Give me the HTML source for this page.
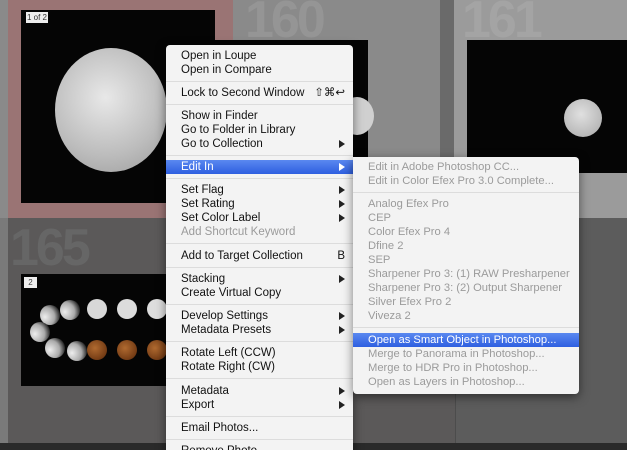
<!DOCTYPE html>
<html style="width:627px;height:450px;overflow:hidden"><head><meta charset="utf-8"><style>
*{margin:0;padding:0;box-sizing:border-box}
body{width:627px;height:450px;overflow:hidden;position:relative;background:#5a5858;font-family:"Liberation Sans",sans-serif}
.abs{position:absolute}
.num{position:absolute;font-weight:bold;font-size:52px;letter-spacing:-3px;line-height:1}
.menu{position:absolute;background:#f3f3f3;box-shadow:0 3px 10px rgba(0,0,0,.5);border-radius:4px;font-size:11.5px;color:#111;overflow:hidden}
.it{height:14px;line-height:14px;padding-left:15px;position:relative;white-space:nowrap}
.sep{height:9px;position:relative}
.sep:after{content:"";position:absolute;left:0;right:0;top:4px;height:1px;background:#dcdcdc}
.ar:after{content:"";position:absolute;right:8px;top:3px;border-left:6px solid #222;border-top:4px solid transparent;border-bottom:4px solid transparent}
.dis{color:#9b9b9b}
.hl{background:linear-gradient(#5a88f0,#2e5fe0);color:#fff}
.hl.ar:after{border-left-color:#fff}
.key{position:absolute;right:8px;top:0}
.sub{font-size:11.2px}
</style></head><body>
<div class="abs" style="left:0;top:0;width:8px;height:218px;background:#8a8a8a"></div>
<div class="abs" style="left:8px;top:0;width:225px;height:218px;background:#9a7474"></div>
<div class="abs" style="left:233px;top:0;width:207px;height:218px;background:#8a8a8a"></div>
<div class="abs" style="left:440px;top:0;width:14px;height:218px;background:#6a6a6a"></div>
<div class="abs" style="left:454px;top:0;width:173px;height:218px;background:#9b9b9b"></div>
<div class="num" style="left:245px;top:-6px;color:#959595">160</div>
<div class="num" style="left:462px;top:-6px;color:#a4a4a4">161</div>
<div class="abs" style="left:0;top:218px;width:8px;height:232px;background:#7a7a7a"></div>
<div class="abs" style="left:8px;top:218px;width:447px;height:225px;background:#5b5959"></div>
<div class="abs" style="left:455px;top:218px;width:172px;height:225px;background:#5c5c5c;border-left:1px solid #4c4c4c"></div>
<div class="abs" style="left:0;top:443px;width:627px;height:7px;background:#2a2a2a"></div>
<div class="num" style="left:10px;top:222px;color:#666">165</div>
<div class="abs" style="left:21px;top:10px;width:194px;height:193px;background:#050505"></div>
<div class="abs" style="left:26px;top:12px;width:22px;height:11px;background:#eee;font-size:8px;line-height:11px;text-align:center;color:#333">1 of 2</div>
<div class="abs" style="left:55px;top:48px;width:112px;height:124px;border-radius:50%;background:radial-gradient(circle at 45% 40%,#e8e8e8,#bcbcbc 60%,#9a9a9a)"></div>
<div class="abs" style="left:203px;top:40px;width:165px;height:133px;background:#050505"></div>
<div class="abs" style="left:340px;top:97px;width:34px;height:38px;border-radius:50%;background:#d0d0d0"></div>
<div class="abs" style="left:467px;top:40px;width:160px;height:133px;background:#050505"></div>
<div class="abs" style="left:564px;top:99px;width:38px;height:38px;border-radius:50%;background:radial-gradient(circle at 45% 40%,#e0e0e0,#a8a8a8)"></div>
<div class="abs" style="left:21px;top:274px;width:150px;height:112px;background:#050505"></div>
<svg class="abs" style="left:0;top:0" width="170" height="400">
<defs>
<radialGradient id="w" cx="0.25" cy="0.6" r="0.8"><stop offset="0" stop-color="#eee"/><stop offset="0.6" stop-color="#aaa"/><stop offset="1" stop-color="#111"/></radialGradient>
<radialGradient id="o" cx="0.4" cy="0.4" r="0.7"><stop offset="0" stop-color="#b06a30"/><stop offset="1" stop-color="#6a3410"/></radialGradient>
</defs>
<circle cx="50" cy="315" r="10" fill="url(#w)"/>
<circle cx="70" cy="310" r="10" fill="url(#w)"/>
<circle cx="97" cy="309" r="10" fill="#d8d8d8"/>
<circle cx="127" cy="309" r="10" fill="#dcdcdc"/>
<circle cx="157" cy="309" r="10" fill="#ddd"/>
<circle cx="40" cy="332" r="10" fill="url(#w)"/>
<circle cx="55" cy="348" r="10" fill="url(#w)"/>
<circle cx="77" cy="351" r="10" fill="url(#w)"/>
<circle cx="97" cy="350" r="10" fill="url(#o)"/>
<circle cx="127" cy="350" r="10" fill="url(#o)"/>
<circle cx="157" cy="350" r="10" fill="url(#o)"/>
</svg>
<div class="abs" style="left:24px;top:277px;width:13px;height:11px;background:#eee;font-size:8px;line-height:11px;text-align:center;color:#444">2</div>
<div class="menu" style="left:166px;top:45px;width:187px;height:410px;padding-top:4px">
<div class="it">Open in Loupe</div>
<div class="it">Open in Compare</div>
<div class="sep"></div>
<div class="it">Lock to Second Window<span class="key">⇧⌘↩</span></div>
<div class="sep"></div>
<div class="it">Show in Finder</div>
<div class="it">Go to Folder in Library</div>
<div class="it ar">Go to Collection</div>
<div class="sep"></div>
<div class="it hl ar">Edit In</div>
<div class="sep"></div>
<div class="it ar">Set Flag</div>
<div class="it ar">Set Rating</div>
<div class="it ar">Set Color Label</div>
<div class="it dis">Add Shortcut Keyword</div>
<div class="sep" style="height:10px"></div>
<div class="it">Add to Target Collection<span class="key">B</span></div>
<div class="sep"></div>
<div class="it ar">Stacking</div>
<div class="it">Create Virtual Copy</div>
<div class="sep"></div>
<div class="it ar">Develop Settings</div>
<div class="it ar">Metadata Presets</div>
<div class="sep"></div>
<div class="it">Rotate Left (CCW)</div>
<div class="it">Rotate Right (CW)</div>
<div class="sep" style="height:10px"></div>
<div class="it ar">Metadata</div>
<div class="it ar">Export</div>
<div class="sep"></div>
<div class="it">Email Photos...</div>
<div class="sep"></div>
<div class="it">Remove Photo</div>
</div>
<div class="menu sub" style="left:353px;top:157px;width:226px;height:237px;padding-top:3px;border-radius:0 4px 4px 4px">
<div class="it dis">Edit in Adobe Photoshop CC...</div>
<div class="it dis">Edit in Color Efex Pro 3.0 Complete...</div>
<div class="sep"></div>
<div class="it dis">Analog Efex Pro</div>
<div class="it dis">CEP</div>
<div class="it dis">Color Efex Pro 4</div>
<div class="it dis">Dfine 2</div>
<div class="it dis">SEP</div>
<div class="it dis">Sharpener Pro 3: (1) RAW Presharpener</div>
<div class="it dis">Sharpener Pro 3: (2) Output Sharpener</div>
<div class="it dis">Silver Efex Pro 2</div>
<div class="it dis">Viveza 2</div>
<div class="sep" style="height:10px"></div>
<div class="it hl">Open as Smart Object in Photoshop...</div>
<div class="it dis">Merge to Panorama in Photoshop...</div>
<div class="it dis">Merge to HDR Pro in Photoshop...</div>
<div class="it dis">Open as Layers in Photoshop...</div>
</div>
</body></html>
